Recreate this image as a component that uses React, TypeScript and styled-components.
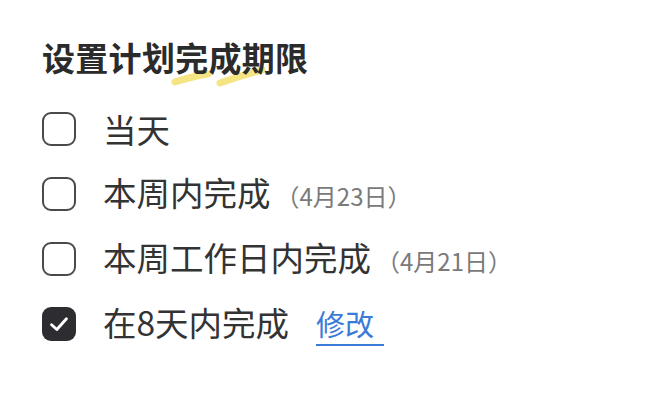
import React from "react";
import styled, { createGlobalStyle } from "styled-components";

const Global = createGlobalStyle`
  html, body { margin: 0; padding: 0; background: #ffffff; }
  body { font-family: "Noto Sans CJK SC", "Noto Sans", sans-serif; }
`;

const Page = styled.div`
  padding: 37px 0 0 42px;
  display: flex;
  flex-direction: column;
`;

const TitleWrap = styled.div`
  position: relative;
  display: inline-block;
  align-self: flex-start;
  margin-bottom: 19px;
`;

const Title = styled.h1`
  position: relative;
  z-index: 1;
  margin: 0;
  font-size: 33px;
  line-height: 40px;
  font-weight: 700;
  color: #2b2b2b;
  letter-spacing: 0.3px;
`;

const Highlight = styled.svg`
  position: absolute;
  left: 128px;
  top: 30px;
  width: 100px;
  height: 24px;
  z-index: 0;
`;

const List = styled.div`
  display: flex;
  flex-direction: column;
`;

const Row = styled.label`
  display: flex;
  align-items: center;
  height: 65px;
  gap: 27px;
`;

const Box = styled.span<{ $checked?: boolean }>`
  width: 34px;
  height: 34px;
  border-radius: 9px;
  box-sizing: border-box;
  border: ${(p) => (p.$checked ? "none" : "2.7px solid #4a4a4a")};
  background: ${(p) => (p.$checked ? "#2c2c31" : "transparent")};
  display: flex;
  align-items: center;
  justify-content: center;
  flex-shrink: 0;
`;

const Label = styled.span`
  font-size: 33.5px;
  line-height: 40px;
  color: #333333;
  display: flex;
  align-items: baseline;
`;

const Hint = styled.span`
  font-size: 24px;
  color: #7a7a7a;
  margin-left: 5px;
`;

const Edit = styled.a`
  font-size: 29px;
  color: #3b7bd8;
  margin-left: 27px;
  padding-right: 10px;
  text-decoration: none;
  border-bottom: 2px solid #3b7bd8;
  line-height: 40px;
  padding-bottom: 1px;
`;

const Check = () => (
  <svg width="24" height="24" viewBox="0 0 20 20">
    <path d="M3.8 10.6 L8.2 14.6 L16.2 5.6" fill="none" stroke="#ffffff" strokeWidth="2.4" strokeLinecap="round" strokeLinejoin="round" />
  </svg>
);

const items = [
  { text: "当天" },
  { text: "本周内完成", hint: "（4月23日）" },
  { text: "本周工作日内完成", hint: "（4月21日）" },
];

export default function App() {
  return (
    <>
      <Global />
      <Page>
        <TitleWrap>
          <Highlight viewBox="0 0 100 24">
            <path d="M5 15 Q20 10 38 7" stroke="#f3df6c" strokeWidth="7" strokeLinecap="round" fill="none" opacity="0.85" />
            <path d="M50 16 Q70 9 92 3" stroke="#f3df6c" strokeWidth="7" strokeLinecap="round" fill="none" opacity="0.85" />
          </Highlight>
          <Title>设置计划完成期限</Title>
        </TitleWrap>
        <List>
          {items.map((it) => (
            <Row key={it.text}>
              <Box />
              <Label>
                {it.text}
                {it.hint && <Hint>{it.hint}</Hint>}
              </Label>
            </Row>
          ))}
          <Row>
            <Box $checked>
              <Check />
            </Box>
            <Label>
              在8天内完成
              <Edit>修改</Edit>
            </Label>
          </Row>
        </List>
      </Page>
    </>
  );
}
